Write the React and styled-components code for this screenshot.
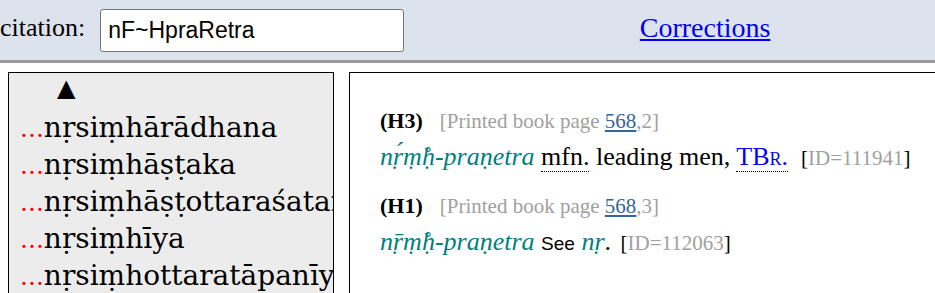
import styled, { createGlobalStyle } from "styled-components";

const GlobalStyle = createGlobalStyle`
  html, body {
    margin: 0;
    padding: 0;
    overflow: hidden;
    background: #fff;
    font-family: "Liberation Serif", "Times New Roman", serif;
  }
`;

const TopBar = styled.div`
  display: flex;
  align-items: center;
  height: 60px;
  background-color: #dce3ec;
  border-bottom: 3px solid #9a9a9a;
`;

const CitationLabel = styled.label`
  font-size: 26px;
  color: #000;
  margin-right: 15px;
  margin-bottom: 5px;
`;

const CitationInput = styled.input`
  box-sizing: border-box;
  width: 304px;
  height: 43px;
  padding: 0 7px;
  border: 1px solid #767676;
  border-radius: 3px;
  background: #fff;
  font-family: "Liberation Sans", Arial, sans-serif;
  font-size: 23px;
  color: #000;
  outline: none;
`;

const LinkCell = styled.div`
  flex: 1;
  display: flex;
  justify-content: center;
  padding-left: 71px;
`;

const TopLink = styled.a`
  font-size: 28px;
  color: #0000ee;
  text-decoration: underline;
  margin-bottom: 5px;
`;

const Panels = styled.div`
  display: flex;
  align-items: flex-start;
  gap: 15px;
  padding: 9px 0 0 8px;
  width: 1100px;
`;

const ListPanel = styled.div`
  box-sizing: border-box;
  width: 326px;
  height: 240px;
  flex-shrink: 0;
  background: #ececec;
  border: 1px solid #000;
  overflow: hidden;
  padding-left: 11px;
`;

const UpArrow = styled.div`
  height: 37px;
  padding-left: 37px;
  font-family: "DejaVu Sans", sans-serif;
  font-size: 24px;
  line-height: 31px;
`;

const ListItem = styled.div`
  font-family: "DejaVu Serif", serif;
  font-size: 28px;
  line-height: 36px;
  white-space: nowrap;
  color: #000;
`;

const Dots = styled.span`
  font-size: 25px;
  color: #ff0000;
`;

const EntryPanel = styled.div`
  box-sizing: border-box;
  width: 700px;
  height: 240px;
  flex-shrink: 0;
  background: #fff;
  border: 1px solid #000;
  padding: 30px 0 0 30px;
`;

const Entry = styled.div`
  margin-bottom: 12px;
`;

const HeadLine = styled.div`
  font-size: 21px;
  line-height: 36px;
  white-space: nowrap;
  color: #000;
`;

const BodyLine = styled.div`
  font-size: 26px;
  line-height: 36px;
  white-space: nowrap;
  color: #000;
`;

const Hom = styled.b`
  font-weight: bold;
  font-size: 22px;
  margin-right: 17px;
`;

const Gray = styled.span`
  color: #a0a0a0;
`;

const PageLink = styled.a`
  color: #336699;
  text-decoration: underline;
`;

const Word = styled.i`
  font-family: "Liberation Serif", "Times New Roman", serif;
  font-style: italic;
  color: #008080;
  font-size: 26px;
`;

const Abbr = styled.span`
  border-bottom: 1px dotted #000;
  color: ${({ $blue }) => ($blue ? "#0000ff" : "inherit")};
`;

const SmallCaps = styled.span`
  font-variant: small-caps;
`;

const Sans = styled.span`
  font-family: "Liberation Sans", Arial, sans-serif;
  font-size: 19px;
`;

const IdTag = styled.span`
  font-size: 21px;
  margin-left: ${({ $gap }) => $gap || 0}px;
`;

const items = [
  "nṛsiṃhārādhana",
  "nṛsiṃhāṣṭaka",
  "nṛsiṃhāṣṭottaraśatanāman",
  "nṛsiṃhīya",
  "nṛsiṃhottaratāpanīya",
];

export default function App() {
  return (
    <>
      <GlobalStyle />
      <TopBar>
        <CitationLabel>citation:</CitationLabel>
        <CitationInput defaultValue="nF~HpraRetra" />
        <LinkCell>
          <TopLink href="#">Corrections</TopLink>
        </LinkCell>
      </TopBar>

      <Panels>
        <ListPanel>
          <UpArrow>▲</UpArrow>
          {items.map((w) => (
            <ListItem key={w}>
              <Dots>...</Dots>
              {w}
            </ListItem>
          ))}
        </ListPanel>

        <EntryPanel>
          <Entry>
            <HeadLine>
              <Hom>(H3)</Hom>
              <Gray>
                [Printed book page <PageLink href="#">568</PageLink>,2]
              </Gray>
            </HeadLine>
            <BodyLine>
              <Word>nṛ́ṃ̊ḥ-praṇetra</Word> <Abbr>mfn.</Abbr> leading men,{" "}
              <Abbr $blue>
                TB<SmallCaps>r</SmallCaps>.
              </Abbr>
              <IdTag $gap={13}>
                [<Gray>ID=111941</Gray>]
              </IdTag>
            </BodyLine>
          </Entry>
          <Entry>
            <HeadLine>
              <Hom>(H1)</Hom>
              <Gray>
                [Printed book page <PageLink href="#">568</PageLink>,3]
              </Gray>
            </HeadLine>
            <BodyLine>
              <Word>nṝṃ̊ḥ-praṇetra</Word> <Sans>See</Sans> <Word>nṛ</Word>.{" "}
              <IdTag $gap={3}>
                [<Gray>ID=112063</Gray>]
              </IdTag>
            </BodyLine>
          </Entry>
        </EntryPanel>
      </Panels>
    </>
  );
}
